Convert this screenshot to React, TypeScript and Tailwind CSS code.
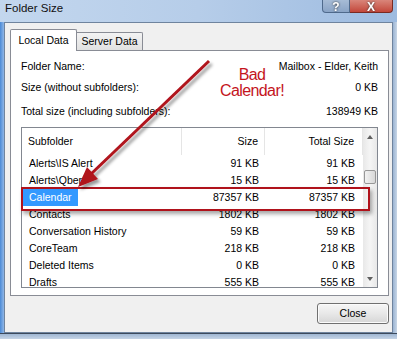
import React from 'react';

const rows = [
  ['Alerts\\IS Alert', '91 KB', '91 KB'],
  ['Alerts\\Qbert', '15 KB', '15 KB'],
  ['Calendar', '87357 KB', '87357 KB'],
  ['Contacts', '1802 KB', '1802 KB'],
  ['Conversation History', '59 KB', '59 KB'],
  ['CoreTeam', '218 KB', '218 KB'],
  ['Deleted Items', '0 KB', '0 KB'],
  ['Drafts', '555 KB', '555 KB'],
];

export default function App() {
  return (
    <div
      className="relative w-[397px] h-[339px] overflow-hidden flex flex-col bg-[#a9c3e2] text-black"
      style={{ fontFamily: '"Liberation Sans", Arial, sans-serif' }}
    >
      {/* Title bar */}
      <div className="h-[22px] flex items-start bg-gradient-to-r from-[#c3d7ee] via-[#b6cde9] to-[#9dbbe0] shrink-0">
        <div className="pl-[5px] pt-[1px] text-[11.5px] leading-[15px] text-[#111]">Folder Size</div>
        <div className="ml-auto mr-[4px] flex h-[13px]">
          <div className="w-[28px] h-full rounded-bl-[4px] border border-t-0 border-[#4f6a8c] bg-gradient-to-b from-[#a7bcd6] to-[#8aa4c6] flex items-end justify-center">
            <span className="text-white font-bold text-[12px] leading-[10px] drop-shadow-[0_0_1px_#333]">?</span>
          </div>
          <div className="w-[43px] h-full rounded-br-[4px] border border-t-0 border-l-0 border-[#7a2a22] bg-gradient-to-b from-[#d9857a] to-[#c2463a] flex items-end justify-center">
            <span className="text-white font-bold text-[12px] leading-[10px] drop-shadow-[0_0_1px_#333]">X</span>
          </div>
        </div>
      </div>

      <div className="flex flex-1 min-h-0">
        <div className="w-[4px] bg-gradient-to-r from-[#4a8ad6] to-[#8fb6e6]" />
        {/* Client area */}
        <div className="flex-1 flex flex-col bg-[#f0f0f0] border border-[#6f849e] pl-[5px] pr-[3px] pt-[6px]">
          {/* Tabs */}
          <div className="h-[21px] flex items-end relative z-10">
            <div className="w-[67px] h-[22px] -mb-px bg-white border border-b-0 border-[#898c95] rounded-t-[2px] flex items-center justify-center text-[10.5px]">
              Local Data
            </div>
            <div className="w-[66px] h-[18px] bg-gradient-to-b from-[#f3f3f3] to-[#e1e1e1] border border-l-0 border-b-0 border-[#898c95] rounded-tr-[2px] flex items-center justify-center text-[10.5px]">
              Server Data
            </div>
          </div>

          {/* Tab panel */}
          <div className="w-[379px] h-[246px] bg-white border border-[#898c95] px-[10px] pt-[8px] text-[10.5px]">
            <div className="h-[16px] flex items-center justify-between">
              <span>Folder Name:</span>
              <span>Mailbox - Elder, Keith</span>
            </div>
            <div className="h-[16px] mt-[5px] flex items-center justify-between">
              <span>Size (without subfolders):</span>
              <span>0 KB</span>
            </div>
            <div className="h-[16px] mt-[8px] flex items-center justify-between">
              <span>Total size (including subfolders):</span>
              <span>138949 KB</span>
            </div>

            {/* List view */}
            <div className="mt-[7px] w-[357px] h-[161px] border border-[#828790] bg-white flex">
              <div className="w-[341px] h-full overflow-hidden">
                <div className="h-[27px] flex">
                  <div className="w-[160px] flex items-center pl-[6px] border-r border-[#e5e5e5]">Subfolder</div>
                  <div className="w-[83px] flex items-center justify-end pr-[6px] border-r border-[#e5e5e5]">Size</div>
                  <div className="w-[98px] flex items-center justify-end pr-[8px] border-r border-[#e5e5e5]">Total Size</div>
                </div>
                {rows.map(([name, size, total]) => {
                  const selected = name === 'Calendar';
                  return (
                    <div key={name} className="h-[17px] flex">
                      <div className="w-[160px] flex items-stretch pl-px">
                        <span
                          className={
                            selected
                              ? 'px-[6px] flex items-center bg-[#3399ff] text-white'
                              : 'px-[6px] flex items-center'
                          }
                        >
                          {name}
                        </span>
                      </div>
                      <div className="w-[83px] flex items-center justify-end pr-[6px]">{size}</div>
                      <div className="w-[98px] flex items-center justify-end pr-[8px]">{total}</div>
                    </div>
                  );
                })}
              </div>
              {/* Scrollbar */}
              <div className="w-[14px] h-full flex flex-col bg-gradient-to-r from-[#e8e8e8] via-[#f5f5f5] to-[#e8e8e8]">
                <div className="h-[17px] flex items-center justify-center">
                  <div className="w-0 h-0 border-l-[3.5px] border-r-[3.5px] border-b-[4px] border-l-transparent border-r-transparent border-b-[#606060]" />
                </div>
                <div className="h-[25px]" />
                <div className="h-[14px] mx-[1px] rounded-[2px] border border-[#979797] bg-gradient-to-r from-[#f2f2f2] to-[#d8d8d8]" />
                <div className="flex-1" />
                <div className="h-[17px] flex items-center justify-center">
                  <div className="w-0 h-0 border-l-[3.5px] border-r-[3.5px] border-t-[4px] border-l-transparent border-r-transparent border-t-[#606060]" />
                </div>
              </div>
            </div>
          </div>

          {/* Buttons */}
          <div className="flex justify-end mt-[7px]">
            <button className="w-[72px] h-[21px] rounded-[3px] border border-[#707070] bg-gradient-to-b from-[#f6f6f6] via-[#e8e8e8] to-[#d6d6d6] text-[10.5px] shadow-[inset_0_0_0_1px_#fbfbfb]">
              Close
            </button>
          </div>
        </div>
        <div className="w-[4px] bg-gradient-to-r from-[#9bb4d3] to-[#c8d6e6]" />
      </div>
      <div className="h-[6px] shrink-0 border-t border-[#3c4a5c] bg-gradient-to-b from-[#9fb6d2] to-[#c5d4e6]" />

      {/* Annotations */}
      <div className="absolute left-[21px] top-[187px] w-[349px] h-[24px] border-[2.5px] border-[#b0121b] shadow-[2px_3px_4px_rgba(0,0,0,0.35)]" />
      <div className="absolute left-[218px] top-[67px] w-[68px] text-center text-[16px] leading-[16px] tracking-[-0.6px] text-[#c4141d]">
        Bad
        <br />
        Calendar!
      </div>
      <svg className="absolute left-0 top-0 pointer-events-none" width="397" height="339" viewBox="0 0 397 339">
        <defs>
          <filter id="sh" x="-20%" y="-20%" width="140%" height="140%">
            <feDropShadow dx="2.5" dy="3" stdDeviation="1.8" floodColor="#000" floodOpacity="0.4" />
          </filter>
        </defs>
        <g filter="url(#sh)">
          <line x1="209" y1="61" x2="91" y2="174" stroke="#b0121b" strokeWidth="3" />
          <polygon points="78,187 98,179 87,167" fill="#b0121b" />
        </g>
      </svg>
    </div>
  );
}
